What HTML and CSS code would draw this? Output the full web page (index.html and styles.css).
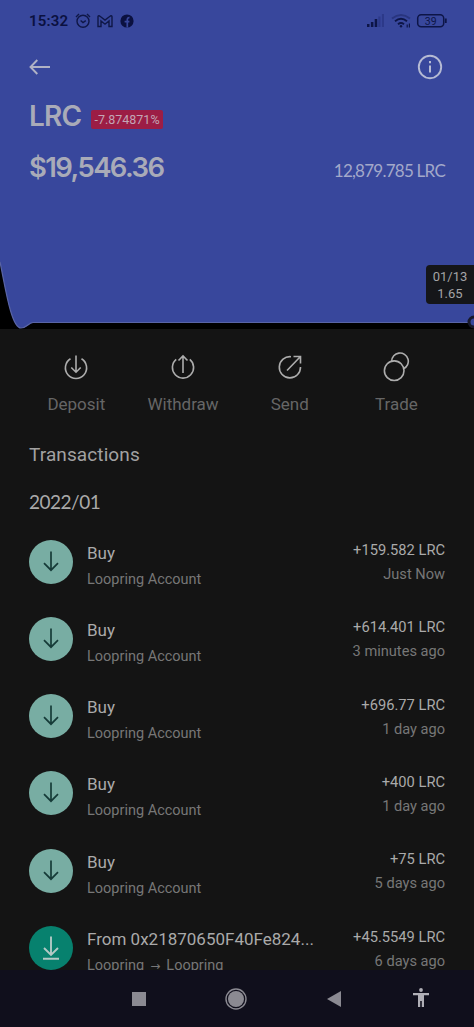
FILE: index.html
```html
<!DOCTYPE html>
<html lang="en">
<head>
<meta charset="utf-8">
<title>LRC</title>
<link rel="stylesheet" href="styles.css">
</head>
<body>
<svg class="defs" width="0" height="0">
  <symbol id="buy" viewBox="0 0 44 44"><path d="M22 11.5V30M15 23.2l7 7 7-7" fill="none" stroke="#163b38" stroke-width="1.7"/></symbol>
</svg>
<main class="phone">
  <section class="hero">
    <svg class="chart" viewBox="0 0 474 329">
      <path d="M0 0H474V323H33C29 323 27 328 21 328C11 328 5 285 0 262Z" fill="#38479c"/>
      <path d="M0 262C5 285 11 328 21 328C27 328 29 322.500 33 322.500H474" fill="none" stroke="#5964a5" stroke-width="1.200"/>
      <circle cx="474" cy="322" r="5" fill="#38479c" stroke="#17182a" stroke-width="3"/>
    </svg>
    <header class="status">
      <span class="clock">15:32</span>
      <svg class="status-left" width="60" height="18" viewBox="0 0 60 18" fill="none" stroke="#0f1746" stroke-width="1.400">
        <circle cx="8" cy="9.300" r="6"/><path d="M1 5l3-3M15 5l-3-3M5.600 8.500L8 10.600l2.800-2"/>
        <path d="M23 14.500V4.800q0-1.500 1.700-.8L30 8l5.300-4q1.700-.7 1.700.8v9.700h-3V9l-4 3.200L26 9v5.500z"/>
        <circle cx="52" cy="9" r="6.600" fill="#0b1140" stroke="none"/>
        <path d="M52.300 15.600V7.500q0-2 2.200-1.800M49.600 9.600h4.800" stroke="#38479c" stroke-width="1.700"/>
      </svg>
      <svg class="status-right" width="82" height="18" viewBox="0 0 82 18">
        <path d="M0 14v-2h2.500v3H0zM3.900 10h2.500v5H3.900zM7.700 7h2.500v8H7.700z" fill="#0d1547"/>
        <path d="M11.300 4.500h2.200V15h-2.200zM14.900 2H17v13h-2.100z" fill="#2c3989"/>
        <g fill="none" stroke="#0d1547" stroke-width="1.900"><path d="M25 6.500q9-7 18 0" stroke="#29357f"/><path d="M28 9.200q6-4.800 12 0M31 12.200q3-2.400 6 0"/></g>
        <circle cx="34" cy="14.200" r="1.200" fill="#0d1547"/><path d="M40.200 12.500v3M42.400 11.500v4" stroke="#0d1547" stroke-width="1.200"/>
        <rect x="50.700" y="2.700" width="26" height="12" rx="3.500" fill="none" stroke="#0d1547" stroke-width="1.500"/>
        <path d="M78.800 6.500v4.500" stroke="#0d1547" stroke-width="1.800"/>
        <text x="63.700" y="12.500" text-anchor="middle" class="battery">39</text>
      </svg>
    </header>
    <nav class="topnav">
      <svg width="22" height="16" viewBox="0 0 22 16" fill="none" stroke="#b0b2c5" stroke-width="1.900"><path d="M21 8H2M8.300 1L1.500 8l6.800 7"/></svg>
      <svg width="26" height="26" viewBox="0 0 26 26" fill="none" stroke="#b6bbd4" stroke-width="1.900"><circle cx="13" cy="13" r="11.200"/><path d="M13 11.500V18.500M13 7v2.200" stroke-width="2"/></svg>
    </nav>
    <div class="token"><h1>LRC</h1><span class="change">-7.874871%</span></div>
    <div class="balance"><strong>$19,546.36</strong><span>12,879.785 LRC</span></div>
    <div class="tip"><span>01/13</span><span>1.65</span></div>
  </section>

  <section class="actions">
    <div><svg width="30" height="30" viewBox="0 0 30 30"><path d="M9.500 6.800A10.600 10.600 0 1 0 20.500 6.800M15 3.500V20M10.300 15.500l4.700 4.700 4.700-4.700"/></svg><span>Deposit</span></div>
    <div><svg width="30" height="30" viewBox="0 0 30 30"><path d="M8.200 7.400A10.600 10.600 0 1 0 21.800 7.400M15 21V4M10.500 8.500L15 4l4.500 4.500"/></svg><span>Withdraw</span></div>
    <div><svg width="30" height="30" viewBox="0 0 30 30"><path d="M16 4.700A10.600 10.600 0 1 0 25.500 15M12 18.500L25 5M18.500 4.500H25.500V11.500"/></svg><span>Send</span></div>
    <div><svg width="30" height="30" viewBox="0 0 30 30"><circle cx="13.200" cy="18.700" r="9.800"/><path d="M10.700 9.200A8.300 8.300 0 1 1 22.600 16.800"/></svg><span>Trade</span></div>
  </section>

  <section class="transactions">
    <h2>Transactions</h2>
    <h3>2022/01</h3>
    <ul>
      <li><svg class="badge"><use href="#buy"/></svg><div class="what"><b>Buy</b><span>Loopring Account</span></div><div class="amount"><b>+159.582 LRC</b><span>Just Now</span></div></li>
      <li><svg class="badge"><use href="#buy"/></svg><div class="what"><b>Buy</b><span>Loopring Account</span></div><div class="amount"><b>+614.401 LRC</b><span>3 minutes ago</span></div></li>
      <li><svg class="badge"><use href="#buy"/></svg><div class="what"><b>Buy</b><span>Loopring Account</span></div><div class="amount"><b>+696.77 LRC</b><span>1 day ago</span></div></li>
      <li><svg class="badge"><use href="#buy"/></svg><div class="what"><b>Buy</b><span>Loopring Account</span></div><div class="amount"><b>+400 LRC</b><span>1 day ago</span></div></li>
      <li><svg class="badge"><use href="#buy"/></svg><div class="what"><b>Buy</b><span>Loopring Account</span></div><div class="amount"><b>+75 LRC</b><span>5 days ago</span></div></li>
      <li><svg class="badge received" viewBox="0 0 44 44"><path d="M22 10.500V28.500M15 22l7 7 7-7M14 32.800H30" fill="none" stroke="#b3c9c5" stroke-width="1.900"/></svg><div class="what"><b>From 0x21870650F40Fe824...</b><span>Loopring <i>→</i> Loopring</span></div><div class="amount"><b>+45.5549 LRC</b><span>6 days ago</span></div></li>
    </ul>
  </section>

  <footer class="navbar">
    <svg width="14" height="24" viewBox="0 0 14 24"><path d="M0 5h14v14H0z" fill="#8b8a92"/></svg>
    <svg width="24" height="24" viewBox="0 0 24 24"><circle cx="12" cy="12" r="10" fill="none" stroke="#8b8a92" stroke-width="1.400"/><circle cx="12" cy="12" r="8" fill="#8b8a92"/></svg>
    <svg width="14" height="24" viewBox="0 0 14 24"><path d="M14 4v16L0 12z" fill="#8b8a92"/></svg>
    <svg width="18" height="24" viewBox="0 0 18 24" fill="#b0afb6"><circle cx="9" cy="3" r="1.900"/><path d="M1 6h16v2.300h-5V20H9.800v-6H8.200v6H6V8.300H1z"/></svg>
  </footer>
</main>
</body>
</html>
```

FILE: styles.css
```css
* { box-sizing: border-box; margin: 0; padding: 0; }
body { background: #141414; font-family: Roboto, sans-serif; color: #aaa; }
.defs { position: absolute; }
.phone { width: 474px; height: 1027px; display: flex; flex-direction: column; overflow: hidden; white-space: nowrap; }

.hero { position: relative; isolation: isolate; height: 329px; flex: none; background: #000; padding: 0 29px; }
.chart { position: absolute; inset: 0; width: 474px; height: 329px; z-index: -1; }
.status { display: flex; align-items: center; height: 42px; }
.clock { font-size: 15px; font-weight: 600; letter-spacing: .2px; color: #0b1140; width: 46px; }
.status-right { margin-left: auto; margin-right: -4px; }
.battery { font: 400 10.500px Roboto, sans-serif; fill: #0d1547; }
.topnav { display: flex; justify-content: space-between; align-items: center; height: 49px; margin-right: 2px; }
.token { display: flex; align-items: flex-start; height: 50px; padding-top: 7px; gap: 10px; }
.token h1 { font: 600 28px/36px Inter, sans-serif; letter-spacing: -.8px; color: #a9abb8; width: 52px; }
.change { margin-top: 12px; height: 19px; width: 72px; background: #9c1d45; border-radius: 2px; color: #c3a5b6; font-size: 12.500px; line-height: 20px; text-align: center; }
.balance { display: flex; justify-content: space-between; align-items: center; height: 52px; color: #a9abb8; font-family: Lato, sans-serif; }
.balance strong { font: 600 27.500px Inter, sans-serif; letter-spacing: -1.600px; }
.balance span { font-size: 17px; padding-top: 6px; color: #a3a9ca; letter-spacing: -.75px; }
.tip { position: absolute; right: 0; top: 265px; width: 48px; height: 39px; border-radius: 4px 0 0 4px; background: #151619; color: #a4a4a6; font-size: 13px; line-height: 17px; padding-top: 3px; display: flex; flex-direction: column; align-items: center; }

.actions { display: grid; grid-template-columns: repeat(4, 106.700px); padding-left: 23px; padding-top: 23px; height: 98px; flex: none; }
.actions div { display: flex; flex-direction: column; align-items: center; }
.actions svg { fill: none; stroke: #adadad; stroke-width: 1.600; }
.actions span { font-size: 17px; line-height: 20px; margin-top: 12px; color: #666; }

.transactions { padding: 0 29px; height: 543px; flex: none; overflow: hidden; }
.transactions h2 { font-size: 19px; font-weight: 400; line-height: 24px; margin-top: 16px; color: #a2a2a2; letter-spacing: .1px; }
.transactions h3 { font: 400 19px/24px Lato, sans-serif; margin-top: 23px; color: #aaa; letter-spacing: -.5px; }
.transactions ul { list-style: none; margin-top: 25.500px; }
.transactions li { display: flex; height: 77.300px; }
.badge { width: 44px; height: 44px; border-radius: 50%; background: #78ada3; flex: none; }
.badge.received { background: #07816e; }
.what { margin-left: 14px; display: flex; flex-direction: column; padding-top: 1px; }
.what b { font-size: 17px; line-height: 25px; font-weight: 400; }
.what span { font-size: 14.500px; line-height: 27px; color: #777; }
.what i { font: 12px/1 "DejaVu Sans", sans-serif; margin: 0 2.500px; }
.amount { margin-left: auto; display: flex; flex-direction: column; align-items: flex-end; padding-top: .6px; }
.amount b { font-size: 14.700px; line-height: 21px; font-weight: 400; }
.amount span { font-size: 14.600px; line-height: 27px; color: #777; }

.navbar { flex: 1; background: #100f1c; display: flex; gap: 78.500px; align-items: center; padding-left: 131.500px; }
.navbar svg:last-child { margin-left: -7.500px; }
```
